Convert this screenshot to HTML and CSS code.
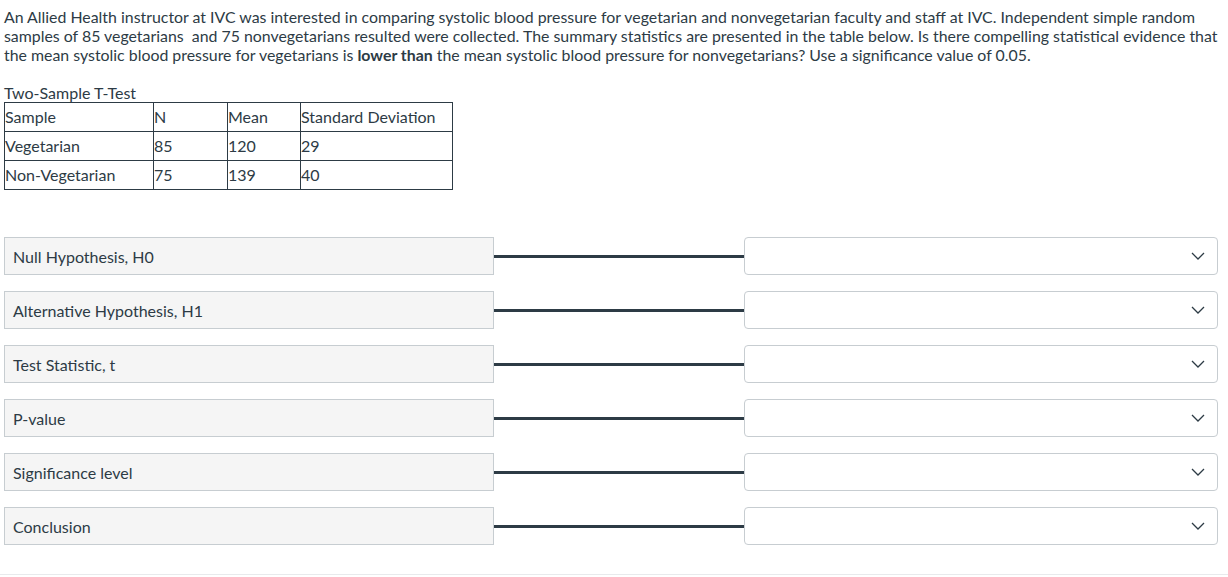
FILE: index.html
```html
<!DOCTYPE html>
<html>
<head>
<meta charset="utf-8">
<link rel="stylesheet" href="styles.css">
</head>
<body>
<div class="page">
  <p class="question">An Allied Health instructor at IVC was interested in comparing systolic blood pressure for vegetarian and nonvegetarian faculty and staff at IVC. Independent simple random samples of 85 vegetarians&nbsp; and 75 nonvegetarians resulted were collected. The summary statistics are presented in the table below. Is there compelling statistical evidence that the mean systolic blood pressure for vegetarians is <strong>lower than</strong> the mean systolic blood pressure for nonvegetarians? Use a significance value of 0.05.</p>
  <div class="caption">Two-Sample T-Test</div>
  <table class="stats">
    <tr><td class="c1">Sample</td><td class="c2">N</td><td class="c3">Mean</td><td class="c4">Standard Deviation</td></tr>
    <tr><td>Vegetarian</td><td>85</td><td>120</td><td>29</td></tr>
    <tr><td>Non-Vegetarian</td><td>75</td><td>139</td><td>40</td></tr>
  </table>
  <div class="matches">
    <div class="match"><div class="label">Null Hypothesis, H0</div><div class="line"></div><div class="select"><svg class="chev" viewBox="0 0 14 8" width="14" height="8"><path d="M1 1 L7 7 L13 1" fill="none" stroke="#2d3b45" stroke-width="1.3"/></svg></div></div>
    <div class="match"><div class="label">Alternative Hypothesis, H1</div><div class="line"></div><div class="select"><svg class="chev" viewBox="0 0 14 8" width="14" height="8"><path d="M1 1 L7 7 L13 1" fill="none" stroke="#2d3b45" stroke-width="1.3"/></svg></div></div>
    <div class="match"><div class="label">Test Statistic, t</div><div class="line"></div><div class="select"><svg class="chev" viewBox="0 0 14 8" width="14" height="8"><path d="M1 1 L7 7 L13 1" fill="none" stroke="#2d3b45" stroke-width="1.3"/></svg></div></div>
    <div class="match"><div class="label">P-value</div><div class="line"></div><div class="select"><svg class="chev" viewBox="0 0 14 8" width="14" height="8"><path d="M1 1 L7 7 L13 1" fill="none" stroke="#2d3b45" stroke-width="1.3"/></svg></div></div>
    <div class="match"><div class="label">Significance level</div><div class="line"></div><div class="select"><svg class="chev" viewBox="0 0 14 8" width="14" height="8"><path d="M1 1 L7 7 L13 1" fill="none" stroke="#2d3b45" stroke-width="1.3"/></svg></div></div>
    <div class="match"><div class="label">Conclusion</div><div class="line"></div><div class="select"><svg class="chev" viewBox="0 0 14 8" width="14" height="8"><path d="M1 1 L7 7 L13 1" fill="none" stroke="#2d3b45" stroke-width="1.3"/></svg></div></div>
  </div>
  <div class="footer-rule"></div>
</div>
</body>
</html>
```

FILE: styles.css
```css
html, body {
  margin: 0;
  padding: 0;
  background: #ffffff;
}
body {
  font-family: Lato, "Open Sans", sans-serif;
  font-size: 16px;
  color: #2d3b45;
}
.page {
  padding: 7px 10px 0 4px;
}
.question {
  margin: 0 -6px 0 0;
  font-size: 15.88px;
  line-height: 19px;
}
.question strong {
  font-weight: 700;
}
.caption {
  margin-top: 20px;
  line-height: 18px;
}
.stats {
  border-collapse: collapse;
  border: 1px solid #2d3b45;
  margin-top: 0;
}
.stats td {
  border: 1px solid #2d3b45;
  padding: 0;
  height: 28px;
  vertical-align: middle;
  line-height: 18px;
}
.stats .c1 { width: 148px; }
.stats .c2 { width: 73px; }
.stats .c3 { width: 72px; }
.stats .c4 { width: 151px; }
.matches {
  margin-top: 47px;
  display: flex;
  flex-direction: column;
  gap: 16px;
}
.match {
  display: flex;
  align-items: center;
  height: 38px;
}
.label {
  width: 490px;
  height: 38px;
  box-sizing: border-box;
  background: #f5f5f5;
  border: 1px solid #c7cdd1;
  padding: 0 8px;
  display: flex;
  align-items: center;
  flex: none;
}
.line {
  width: 250px;
  height: 3px;
  background: #2d3b45;
  flex: none;
}
.select {
  flex: 1;
  height: 38px;
  box-sizing: border-box;
  border: 1px solid #c7cdd1;
  border-radius: 4px;
  background: #ffffff;
  display: flex;
  align-items: center;
  justify-content: flex-end;
  padding-right: 12px;
}
.chev {
  display: block;
}
.footer-rule {
  margin-top: 29px;
  margin-left: -4px;
  margin-right: -10px;
  border-top: 1px solid #e8eaec;
}
```
